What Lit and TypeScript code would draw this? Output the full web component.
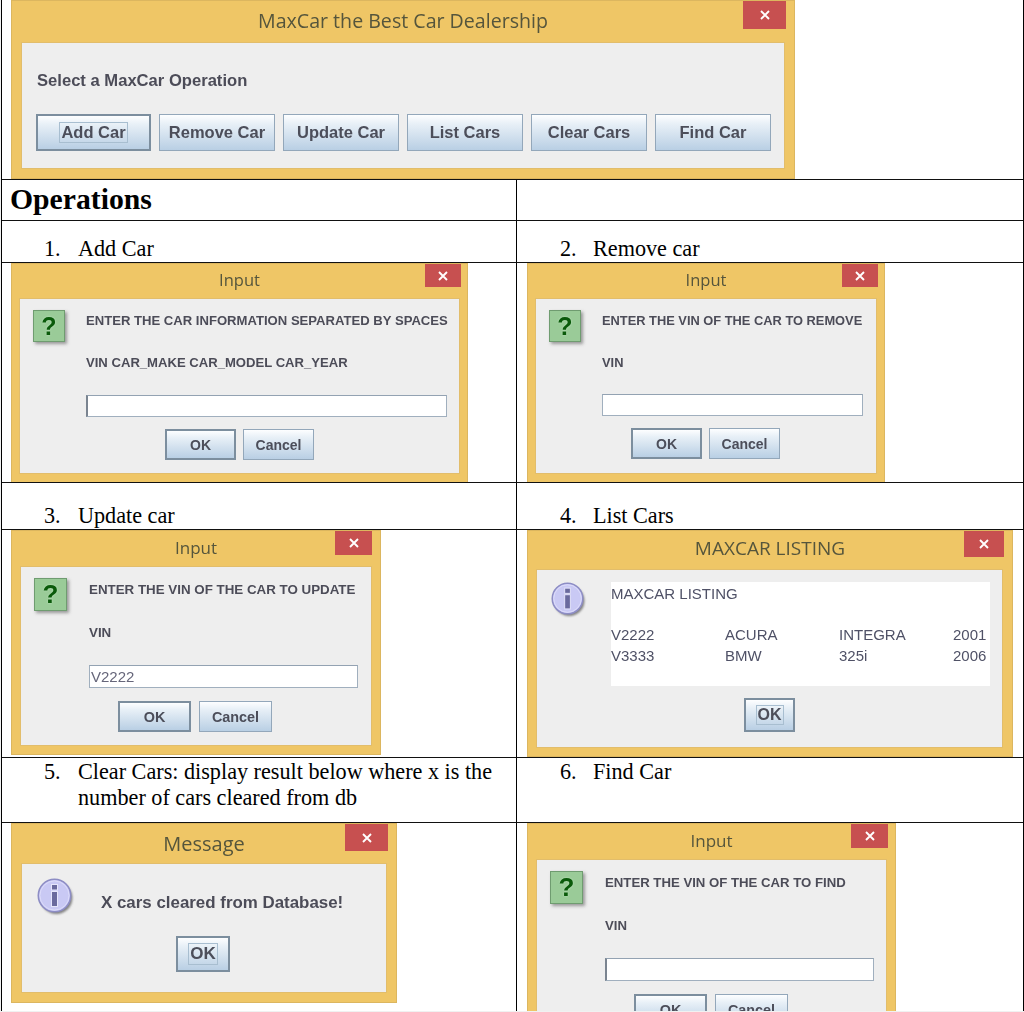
import { LitElement, html, css, svg } from "lit";
import { customElement } from "lit/decorators.js";

const closeIcon = svg`<svg class="x" viewBox="0 0 10 10"><path d="M1 1 L9 9 M9 1 L1 9" stroke="#fff" stroke-width="1.9" fill="none"/></svg>`;

const infoIcon = html`<svg class="icon" viewBox="0 0 36 36">
  <defs><filter id="s" x="-20%" y="-20%" width="150%" height="150%"><feGaussianBlur stdDeviation="1.2"/></filter></defs>
  <circle cx="19.4" cy="20" r="16" fill="#666" opacity=".8" filter="url(#s)"/>
  <circle cx="17.5" cy="17.5" r="16.2" fill="#c9c9f4" stroke="#8d8dc4" stroke-width="1.6"/>
  <circle cx="17.5" cy="17.5" r="14.6" fill="none" stroke="#dddcfa" stroke-width="1"/>
  <rect x="14.5" y="6.5" width="6" height="5.5" fill="#6a6a9e" stroke="#e6e6fb" stroke-width="1"/>
  <rect x="14.5" y="13.5" width="6" height="15" fill="#6a6a9e" stroke="#e6e6fb" stroke-width="1"/>
</svg>`;

const button = (label: string, focused = false, ring = false) =>
  html`<div class="btn ${focused ? "focus" : ""}"><span class="${ring ? "ring" : ""}">${label}</span></div>`;

const frame = (cls: string, title: string, body: unknown) => html`
  <div class="dialog ${cls}">
    <div class="bar">${title}</div>
    <div class="close">${closeIcon}</div>
    <div class="body">${body}</div>
  </div>`;

const inputDialog = (cls: string, line1: string, line2: string, value: string, caret: boolean) =>
  frame(cls, "Input", html`
    <div class="q"><span>?</span></div>
    <div class="content">
      <div class="line">${line1}</div>
      <div class="line second">${line2}</div>
      <div class="field ${caret ? "caret" : ""}">${value}</div>
      <div class="actions">${button("OK", true)}${button("Cancel")}</div>
    </div>`);

const rows = [
  ["V2222", "ACURA", "INTEGRA", "2001"],
  ["V3333", "BMW", "325i", "2006"],
];

@customElement("app-root")
export class AppRoot extends LitElement {
  static styles = css`
    :host { display: block; width: 1024px; height: 1012px; overflow: hidden; background: #f0f1f1; padding-left: 1px; box-sizing: border-box; }
    .table {
      width: 1023px; height: 1011px; box-sizing: border-box; overflow: hidden; background: #fff;
      border-left: 1px solid #000; border-right: 1px solid #000;
      display: grid; grid-template-columns: 515px 1fr;
      grid-template-rows: 180px 41px 42px 220px 47px 228px 65px 188px;
      font-family: "Liberation Serif", serif; color: #000;
    }
    .cell { border-bottom: 1px solid #111; border-right: 1px solid #000; box-sizing: border-box; padding-left: 9px; min-width: 0; overflow: hidden; }
    .cell.right { border-right: none; padding-left: 10px; }
    .cell.top { grid-column: 1 / 3; border-right: none; }
    .cell.last { border-bottom: none; }
    .heading { font-weight: 700; font-size: 29.7px; line-height: 38px; margin-left: -1px; }
    .item { display: flex; font-size: 22.2px; line-height: 26px; padding-left: 33px; }
    .item .num { width: 34px; flex: none; }
    .cell.right .item .num { width: 33px; }
    .cell.right .item { padding-left: 33px; }
    .item.low { padding-top: 15px; }
    .item.lab { padding-top: 20px; }
    .item.wrap { padding-top: 1px; }

    .dialog {
      position: relative; box-sizing: border-box; display: flex; flex-direction: column;
      width: var(--w); height: var(--h); background: #efc666; border: 1px solid #dcb65f;
      font-family: "Liberation Sans", Arial, sans-serif; color: #4c4c58; filter: blur(0.3px);
    }
    .bar { height: var(--bar); flex: none; display: flex; align-items: center; justify-content: center;
      font-family: "Open Sans", sans-serif; font-size: var(--title); color: #55553c; padding-bottom: var(--tb, 0); box-sizing: border-box; }
    .close { position: absolute; top: 0; right: var(--cr); width: var(--cw); height: var(--ch); background: #c75050; display: flex; align-items: center; justify-content: center; }
    .x { width: 10px; height: 10px; display: block; }
    .body { flex: 1; min-height: 0; margin: 0 var(--side) var(--side); background: #eeeeee; border: 1px solid #e2bd6b; display: flex; box-sizing: border-box; padding: var(--pt) 0 0 var(--pl); }
    .q { width: var(--icon); height: var(--icon); flex: none; box-sizing: border-box; background: #9acb98; border: 1px solid #6f9c70; box-shadow: 2px 2px 3px rgba(70,70,70,.5); display: flex; align-items: center; justify-content: center; color: #0a5a0a; font: 700 var(--qs) "Liberation Sans", sans-serif; }
    .q span { text-shadow: 0 0 2px #c6e8c6; }
    .icon { width: var(--icon); height: var(--icon); flex: none; display: block; overflow: visible; }
    .content { margin-left: var(--gx); margin-top: var(--ct, 0); width: var(--cwid); flex: none; }
    .line { font-weight: 700; font-size: var(--fs); line-height: 20px; white-space: nowrap; }
    .line.second { margin-top: var(--lg); }
    .field { box-sizing: border-box; margin-top: var(--fg); height: var(--fh); background: #fff; border: 1px solid #a0afbe; border-top-color: #93a2b2; font-size: 15px; line-height: 21px; padding-left: 1px; color: #66667a; }
    .field.caret { border-left: 2px solid #7a8490; padding-left: 0; }
    .actions { display: flex; gap: var(--bg); margin-top: var(--ag); padding-left: var(--ai); }
    .btn { box-sizing: border-box; width: var(--bw); height: var(--bh); border: 1px solid #93a7ba; background: linear-gradient(#fdfeff 0%, #e8f0f7 25%, #b9cfe4 100%); display: flex; align-items: center; justify-content: center; font-weight: 700; font-size: var(--bf); color: #4c4e5a; flex: none; }
    .btn.focus { border: 2px solid #7c8e9e; }
    .ring { border: 1px solid #a8bed0; padding: 0 1px; line-height: 1.15; }

    .main { --w: 784px; --h: 179px; --bar: 41px; --tb: 3px; --title: 19.6px; --side: 9px; --cr: 8px; --cw: 43px; --ch: 28px; --bw: 116px; --bh: 37px; --bf: 16.5px; }
    .main .body { flex-direction: column; padding: 28px 0 0 14px; }
    .main .lead { font-weight: 700; font-size: 16.6px; line-height: 20px; margin-left: 1px; }
    .main .actions { --bg: 8px; --ag: 23px; --ai: 0px; }
    .main .btn:first-child { width: 115px; }

    .d1, .d2 { --h: 220px; --bar: 34px; --tb: 3px; --title: 16.5px; --side: 7px; --cr: 6px; --cw: 36px; --ch: 23px; --pt: 11px; --pl: 13px; --ct: 1px; --icon: 32px; --qs: 25px; --lg: 22px; --fh: 22px; --bg: 7px; --ag: 12px; --bw: 71px; --bh: 31px; --bf: 14px; }
    .d1 .body, .d2 .body { margin-bottom: 8px; }
    .d1 { --w: 457px; --gx: 21px; --cwid: 361px; --fs: 13.1px; --ai: 79px; --fg: 22px; }
    .d2 { --w: 358px; --gx: 21px; --cwid: 261px; --fs: 12.85px; --ai: 29px; --fg: 21px; }
    .d3, .d6 { --bar: 35px; --tb: 3px; --title: 17px; --side: 8px; --cr: 8px; --cw: 37px; --ch: 24px; --pt: 11px; --pl: 13px; --icon: 33px; --qs: 26px; --lg: 23px; --fg: 22px; --fh: 23px; --bg: 8px; --ag: 13px; --bw: 73px; --bh: 31px; --bf: 14.4px; --fs: 13.35px; --cwid: 269px; --gx: 22px; --ai: 29px; }
    .d3 { --w: 370px; --h: 225px; --ct: 2px; }
    .d6 { --w: 369px; --h: 230px; --ct: 2px; --fs: 13.2px; --cr: 7px; }
    .d4 { --w: 486px; --h: 227px; --bar: 38px; --tb: 4px; --title: 19px; --side: 8px; --cr: 8px; --cw: 40px; --ch: 26px; --pt: 12px; --pl: 14px; --icon: 34px; --bw: 51px; --bh: 34px; --bf: 16px; }
    .d4 .body { margin-right: 9px; }
    .d4 .content { margin-left: 26px; width: 379px; }
    .panel { background: #fff; height: 104px; box-sizing: border-box; padding-top: 1px; font-size: 15px; line-height: 21px; color: #4f5166; }
    .panel .gap { height: 20px; }
    .panel .row { display: grid; grid-template-columns: repeat(3, 114px) 1fr; }
    .d4 .actions { --ag: 12px; --bg: 0; --ai: 133px; }
    .d5 { --w: 386px; --h: 180px; --bar: 39px; --title: 20px; --side: 9px; --cr: 8px; --cw: 43px; --ch: 27px; --pt: 14px; --pl: 15px; --icon: 36px; --bw: 54px; --bh: 36px; --bf: 17px; }
    .d5 .content { margin-left: 28px; width: 241px; }
    .d5 .line { font-size: 16.9px; line-height: 22px; margin-top: 14px; white-space: nowrap; }
    .d5 .actions { --ag: 22px; --bg: 0; --ai: 75px; }
  `;

  render() {
    return html`<div class="table">
      <div class="cell top">
        ${frame("main", "MaxCar the Best Car Dealership", html`
          <div class="lead">Select a MaxCar Operation</div>
          <div class="actions">
            <div class="btn focus"><span class="ring">Add Car</span></div>
            ${["Remove Car", "Update Car", "List Cars", "Clear Cars", "Find Car"].map((b) => button(b))}
          </div>`)}
      </div>
      <div class="cell"><div class="heading">Operations</div></div>
      <div class="cell right"></div>
      <div class="cell"><div class="item low"><span class="num">1.</span><span>Add Car</span></div></div>
      <div class="cell right"><div class="item low"><span class="num">2.</span><span>Remove car</span></div></div>
      <div class="cell">${inputDialog("d1", "ENTER THE CAR INFORMATION SEPARATED BY SPACES", "VIN CAR_MAKE CAR_MODEL CAR_YEAR", "", true)}</div>
      <div class="cell right">${inputDialog("d2", "ENTER THE VIN OF THE CAR TO REMOVE", "VIN", "", false)}</div>
      <div class="cell"><div class="item lab"><span class="num">3.</span><span>Update car</span></div></div>
      <div class="cell right"><div class="item lab"><span class="num">4.</span><span>List Cars</span></div></div>
      <div class="cell">${inputDialog("d3", "ENTER THE VIN OF THE CAR TO UPDATE", "VIN", "V2222", false)}</div>
      <div class="cell right">
        ${frame("d4", "MAXCAR LISTING", html`
          ${infoIcon}
          <div class="content">
            <div class="panel">
              <div>MAXCAR LISTING</div>
              <div class="gap"></div>
              ${rows.map((r) => html`<div class="row">${r.map((c) => html`<span>${c}</span>`)}</div>`)}
            </div>
            <div class="actions">${button("OK", true, true)}</div>
          </div>`)}
      </div>
      <div class="cell"><div class="item wrap"><span class="num">5.</span><span>Clear Cars: display result below where x is the number of cars cleared from db</span></div></div>
      <div class="cell right"><div class="item wrap"><span class="num">6.</span><span>Find Car</span></div></div>
      <div class="cell last">
        ${frame("d5", "Message", html`
          ${infoIcon}
          <div class="content">
            <div class="line">X cars cleared from Database!</div>
            <div class="actions">${button("OK", true, true)}</div>
          </div>`)}
      </div>
      <div class="cell right last">${inputDialog("d6", "ENTER THE VIN OF THE CAR TO FIND", "VIN", "", true)}</div>
    </div>`;
  }
}
